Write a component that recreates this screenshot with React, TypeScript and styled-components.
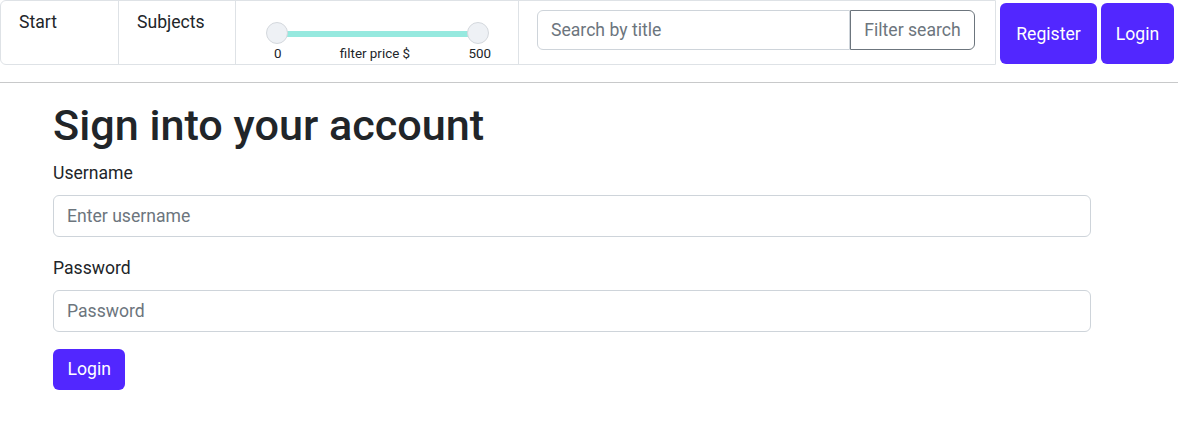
import React from "react";
import styled, { createGlobalStyle } from "styled-components";

const GlobalStyle = createGlobalStyle`
  * { box-sizing: border-box; }
  body {
    margin: 0;
    font-family: Roboto, "Liberation Sans", sans-serif;
    color: #212529;
    background: #fff;
  }
`;

const PURPLE = "#5227ff";

const Header = styled.header`
  display: flex;
  align-items: flex-start;
  gap: 4px;
`;

const NavGroup = styled.ul`
  display: flex;
  margin: 0;
  padding: 0;
  list-style: none;
  height: 65px;
  border: 1px solid #dee2e6;
  border-radius: 6px 0 0 6px;
`;

const NavItem = styled.li<{ $width: number }>`
  width: ${(p) => p.$width}px;
  padding: 8px 18px;
  font-size: 17.6px;
  line-height: 26.4px;
  border-right: 1px solid #dee2e6;
`;

const SliderCell = styled.li`
  width: 283px;
  padding: 21px 0 0 30px;
  border-right: 1px solid #dee2e6;
`;

const Range = styled.div`
  position: relative;
  width: 223px;
  height: 22px;
`;

const Track = styled.div`
  position: absolute;
  left: 11px;
  right: 11px;
  top: 9px;
  height: 6px;
  background: #96e9df;
`;

const Thumb = styled.div<{ $side: "left" | "right" }>`
  position: absolute;
  top: 0;
  ${(p) => p.$side}: 0;
  width: 22px;
  height: 22px;
  border-radius: 50%;
  background: #eef1f5;
  border: 1px solid #d4d8dd;
`;

const RangeLabels = styled.div`
  display: flex;
  justify-content: space-between;
  width: 217px;
  margin: 2px 0 0 8px;
  font-size: 13.4px;
  line-height: 15px;
  color: #212529;
`;

const SearchCell = styled.li`
  width: 476px;
  padding: 9px 0 0 18px;
`;

const InputGroup = styled.form`
  display: flex;
  width: 438px;
  height: 40px;
`;

const SearchInput = styled.input`
  width: 313px;
  height: 100%;
  padding: 0 13px;
  border: 1px solid #ced4da;
  border-radius: 6px 0 0 6px;
  font: inherit;
  font-size: 17.6px;
  color: #212529;
  outline: none;

  &::placeholder {
    color: #6c757d;
  }
`;

const OutlineButton = styled.button`
  flex: 1;
  height: 100%;
  padding: 0 13px;
  border: 1px solid #6c757d;
  border-radius: 0 6px 6px 0;
  background: #fff;
  color: #6c757d;
  font: inherit;
  font-size: 17.6px;
`;

const NavButton = styled.button<{ $width: number }>`
  width: ${(p) => p.$width}px;
  margin-top: 3px;
  height: 61px;
  padding: 0;
  border: none;
  border-radius: 6px;
  background: ${PURPLE};
  color: #fff;
  font: inherit;
  font-size: 17.6px;
`;

const Divider = styled.hr`
  margin: 17px 0 0;
  border: none;
  border-top: 1px solid #c8c9ca;
`;

const Main = styled.main`
  width: 1038px;
  margin-left: 53px;
`;

const Title = styled.h1`
  margin: 17px 0 7px;
  font-size: 43.2px;
  font-weight: 500;
  line-height: 52.8px;
`;

const Field = styled.div`
  margin-bottom: 17.6px;
`;

const Label = styled.label`
  display: block;
  margin-bottom: 9px;
  font-size: 17.6px;
  line-height: 26.4px;
`;

const TextInput = styled.input`
  display: block;
  width: 100%;
  height: 42px;
  padding: 0 13px;
  border: 1px solid #ced4da;
  border-radius: 6px;
  font: inherit;
  font-size: 17.6px;
  color: #212529;
  outline: none;

  &::placeholder {
    color: #6c757d;
  }
`;

const SubmitButton = styled.button`
  height: 41px;
  margin-top: -1px;
  padding: 0 14.5px;
  border: none;
  border-radius: 6px;
  background: ${PURPLE};
  color: #fff;
  font: inherit;
  font-size: 17.6px;
`;

export default function App() {
  return (
    <>
      <GlobalStyle />
      <Header>
        <NavGroup>
          <NavItem $width={118}>Start</NavItem>
          <NavItem $width={117}>Subjects</NavItem>
          <SliderCell>
            <Range>
              <Track />
              <Thumb $side="left" />
              <Thumb $side="right" />
            </Range>
            <RangeLabels>
              <span>0</span>
              <span>filter price $</span>
              <span>500</span>
            </RangeLabels>
          </SliderCell>
          <SearchCell>
            <InputGroup onSubmit={(e) => e.preventDefault()}>
              <SearchInput placeholder="Search by title" />
              <OutlineButton type="submit">Filter search</OutlineButton>
            </InputGroup>
          </SearchCell>
        </NavGroup>
        <NavButton $width={97}>Register</NavButton>
        <NavButton $width={73}>Login</NavButton>
      </Header>
      <Divider />
      <Main>
        <Title>Sign into your account</Title>
        <form onSubmit={(e) => e.preventDefault()}>
          <Field>
            <Label htmlFor="username">Username</Label>
            <TextInput id="username" placeholder="Enter username" />
          </Field>
          <Field>
            <Label htmlFor="password">Password</Label>
            <TextInput id="password" type="password" placeholder="Password" />
          </Field>
          <SubmitButton type="submit">Login</SubmitButton>
        </form>
      </Main>
    </>
  );
}
